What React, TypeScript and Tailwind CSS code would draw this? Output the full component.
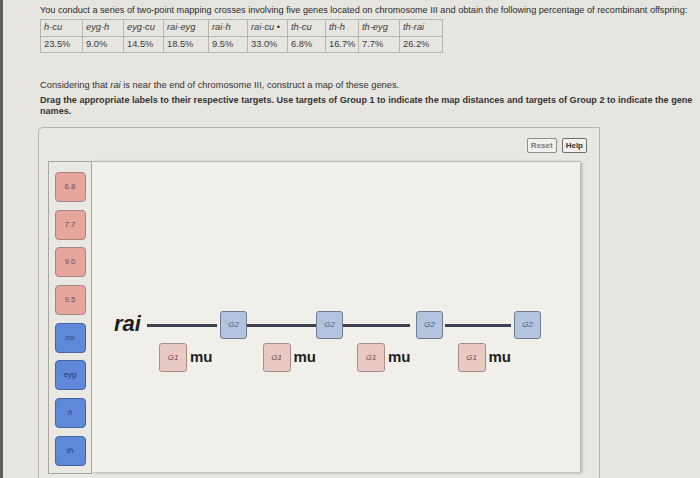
import React from "react";

const cols: { h: string; v: string; w: string }[] = [
  { h: "h-cu", v: "23.5%", w: "w-[42px]" },
  { h: "eyg-h", v: "9.0%", w: "w-[41px]" },
  { h: "eyg-cu", v: "14.5%", w: "w-[40px]" },
  { h: "rai-eyg", v: "18.5%", w: "w-[45px]" },
  { h: "rai-h", v: "9.5%", w: "w-[39px]" },
  { h: "rai-cu •", v: "33.0%", w: "w-[40px]" },
  { h: "th-cu", v: "6.8%", w: "w-[38px]" },
  { h: "th-h", v: "16.7%", w: "w-[33px]" },
  { h: "th-eyg", v: "7.7%", w: "w-[41px]" },
  { h: "th-rai", v: "26.2%", w: "w-[43px]" },
];

function Pink({ t }: { t: string }) {
  return (
    <div className="w-[31px] h-[30px] rounded-[4px] bg-[#e6a69d] border border-[#a8847f] flex items-center justify-center text-[8px] text-[#6b4f4b] shrink-0">
      {t}
    </div>
  );
}

function Blue({ t }: { t: string }) {
  return (
    <div className="w-[31px] h-[30px] rounded-[4px] bg-[#5f89d8] border border-[#45649f] flex items-center justify-center text-[8px] italic text-[#223c78] shrink-0">
      {t}
    </div>
  );
}

function G2() {
  return (
    <div className="w-[27px] h-[28px] rounded-[3px] bg-[#b4c4de] border border-[#6f7d94] flex items-center justify-center text-[8px] italic text-[#4b5b7a] shrink-0">
      G2
    </div>
  );
}

function G1Mu({ ml }: { ml: string }) {
  return (
    <div className={`flex items-center gap-[3px] ${ml}`}>
      <div className="w-[28px] h-[29px] rounded-[3px] bg-[#e9c9c3] border border-[#a68d89] flex items-center justify-center text-[8px] italic text-[#6b4b4b] shrink-0">
        G1
      </div>
      <span className="text-[15px] font-bold text-[#1e1e1e] leading-none -mt-[2px]">mu</span>
    </div>
  );
}

function Line({ w }: { w: string }) {
  return <div className={`h-[3px] bg-[#3a4152] ${w}`} />;
}

export default function App() {
  return (
    <div className="w-[700px] h-[478px] overflow-hidden bg-[#e7e5df] border-l-[3px] border-[#5e5e5e] font-['Liberation_Sans',Arial,sans-serif] text-[#2a2a2a]">
      <div className="pl-[37px] pt-[4px] pr-[1px]">
        <p className="text-[9.15px] leading-[12px] whitespace-nowrap">
          You conduct a series of two-point mapping crosses involving five genes located on chromosome III and obtain the following percentage of recombinant offspring:
        </p>
        <table className="mt-[3px] border-collapse text-[9.3px] text-[#3a3a3a]">
          <tbody>
            <tr>
              {cols.map((c) => (
                <td key={c.h} className={`${c.w} h-[17px] border border-[#b7b5b0] pl-[3px] italic`}>
                  {c.h}
                </td>
              ))}
            </tr>
            <tr>
              {cols.map((c) => (
                <td key={c.h} className={`${c.w} h-[16px] border border-[#b7b5b0] pl-[3px]`}>
                  {c.v}
                </td>
              ))}
            </tr>
          </tbody>
        </table>
        <p className="mt-[27px] text-[9.3px] leading-[11px] text-[#333]">
          Considering that <i>rai</i> is near the end of chromosome III, construct a map of these genes.
        </p>
        <p className="mt-[4px] text-[9.1px] leading-[11px] font-bold text-[#333]">
          Drag the appropriate labels to their respective targets. Use targets of Group 1 to indicate the map distances and targets of Group 2 to indicate the gene names.
        </p>
      </div>

      <div className="ml-[35px] mt-[10px] w-[562px] h-[360px] border border-[#b6b4ae] rounded-tl-[5px] bg-[#e9e7e2]">
        <div className="h-[33px] flex justify-end items-start gap-[5px] pr-[12px] pt-[10px]">
          <div className="h-[15px] px-[3px] border border-[#8e8e8c] rounded-[2px] bg-[#f1f0ec] text-[8px] font-bold text-[#7a7a7a] flex items-center">
            Reset
          </div>
          <div className="h-[15px] px-[3px] border border-[#6e6e6c] rounded-[2px] bg-[#f1f0ec] text-[8px] font-bold text-[#333] flex items-center">
            Help
          </div>
        </div>
        <div className="flex items-start">
          <div className="ml-[9px] w-[44px] h-[313px] border border-[#a9a7a2] bg-[#e9e8e3] flex flex-col items-center gap-[7.7px] pt-[10px]">
            <Pink t="6.8" />
            <Pink t="7.7" />
            <Pink t="9.0" />
            <Pink t="9.5" />
            <Blue t="cu" />
            <Blue t="eyg" />
            <Blue t="h" />
            <Blue t="th" />
          </div>
          <div className="w-[488px] h-[311px] bg-[#f0efea] border-t border-[#b9b7b2] shadow-[2px_1px_3px_rgba(0,0,0,0.25)]">
            <div className="pt-[149px] pl-[22px] flex items-center">
              <span className="text-[22px] font-bold italic text-[#1e1e1e] leading-none w-[31px] -mt-[3px]">rai</span>
              <div className="ml-[2px]" />
              <Line w="w-[70px]" />
              <div className="ml-[3px]" />
              <G2 />
              <Line w="w-[69px]" />
              <G2 />
              <Line w="w-[67px]" />
              <div className="ml-[6px]" />
              <G2 />
              <div className="ml-[2px]" />
              <Line w="w-[66px]" />
              <div className="ml-[3px]" />
              <G2 />
            </div>
            <div className="mt-[4px] flex items-center">
              <G1Mu ml="ml-[67px]" />
              <G1Mu ml="ml-[50px]" />
              <G1Mu ml="ml-[41px]" />
              <G1Mu ml="ml-[47px]" />
            </div>
          </div>
        </div>
      </div>
    </div>
  );
}
